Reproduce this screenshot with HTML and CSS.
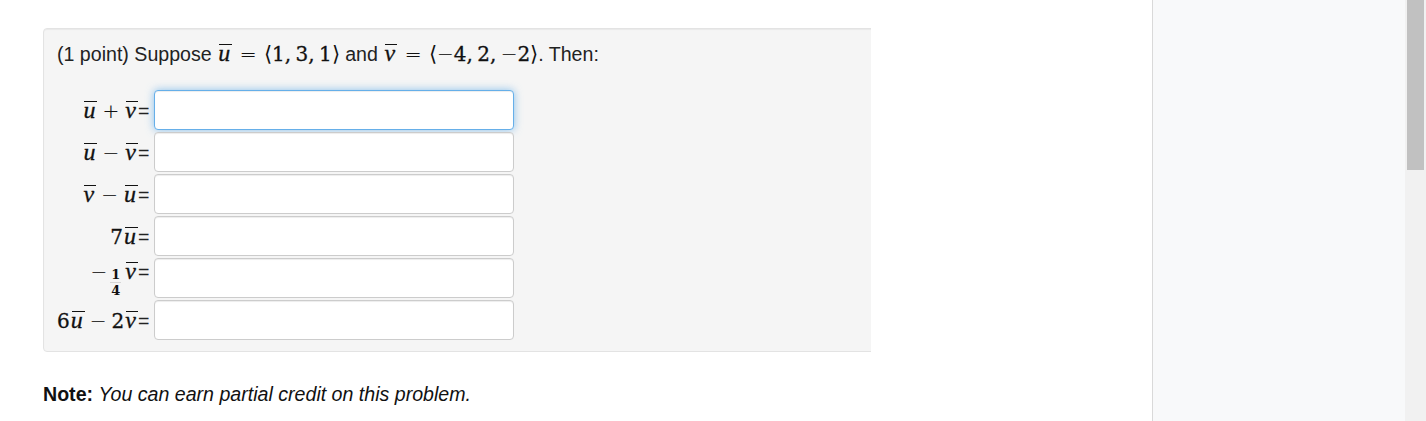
FILE: index.html
```html
<!DOCTYPE html>
<html lang="en">
<head>
    <meta charset="UTF-8">
    <meta name="viewport" content="width=device-width, initial-scale=1.0">
    <title>Vector operations</title>
    <link rel="stylesheet" href="styles.css">
</head>
<body>

<div class="page">
    <main class="content">
        <div class="problem-clip">
            <div class="problem">
                <p class="statement">
                    (1 point) Suppose
                    <span class="math"><span class="vec">u</span><span class="op rel">=</span><span class="ang">⟨</span>1,<span class="thin"></span>3,<span class="thin"></span>1<span class="ang">⟩</span></span>
                    and
                    <span class="math"><span class="vec">v</span><span class="op rel">=</span><span class="ang">⟨</span><span class="op">−</span>4,<span class="thin"></span>2,<span class="thin"></span><span class="op">−</span>2<span class="ang">⟩</span></span>. Then:
                </p>

                <table class="answers">
                    <tr>
                        <td class="label"><span class="math"><span class="vec">u</span><span class="op bin">+</span><span class="vec">v</span></span>=</td>
                        <td><input class="answer focused" type="text"></td>
                    </tr>
                    <tr>
                        <td class="label"><span class="math"><span class="vec">u</span><span class="op bin">−</span><span class="vec">v</span></span>=</td>
                        <td><input class="answer" type="text"></td>
                    </tr>
                    <tr>
                        <td class="label"><span class="math"><span class="vec">v</span><span class="op bin">−</span><span class="vec">u</span></span>=</td>
                        <td><input class="answer" type="text"></td>
                    </tr>
                    <tr>
                        <td class="label"><span class="math">7<span class="vec">u</span></span>=</td>
                        <td><input class="answer" type="text"></td>
                    </tr>
                    <tr>
                        <td class="label"><span class="math"><span class="op">−</span><span class="frac"><span class="num">1</span><span class="den">4</span></span><span class="vec">v</span></span>=</td>
                        <td><input class="answer" type="text"></td>
                    </tr>
                    <tr>
                        <td class="label"><span class="math">6<span class="vec">u</span><span class="op bin">−</span>2<span class="vec">v</span></span>=</td>
                        <td><input class="answer" type="text"></td>
                    </tr>
                </table>
            </div>
        </div>

        <p class="note"><b>Note:</b> <i>You can earn partial credit on this problem.</i></p>
    </main>

    <aside class="sidebar"></aside>

    <div class="scrollbar"><div class="thumb"></div></div>
</div>

</body>
</html>
```

FILE: styles.css
```css
* {box-sizing: border-box; margin: 0; padding: 0;}

body {
    font-family: "Liberation Sans", Arial, sans-serif;
    font-size: 19.6px;
    line-height: 1.36;
    color: #222;
    background: #fff;
}

.page {
    display: flex;
    height: 100vh;
    overflow: hidden;
}

.content {
    flex: 0 0 1152px;
    padding: 28px 0 0 43px;
}

/* the well is wider than the column and gets cut off on the right */
.problem-clip {
    width: 828px;
    overflow: hidden;
}

.problem {
    width: 1000px;
    background: #f5f5f5;
    border: 1px solid #e3e3e3;
    border-radius: 4px;
    box-shadow: inset 0 1px 1px rgba(0,0,0,0.05);
    padding: 12px 13px 10px;
}

.statement {
    margin-bottom: 21px;
}

.math {
    font-family: "DejaVu Serif", "Liberation Serif", serif;
    font-size: 20px;
    line-height: 1;
    color: #111;
    -webkit-text-stroke: 0.3px #111;
    white-space: nowrap;
}

.vec {
    position: relative;
    font-family: "Liberation Serif", serif;
    font-size: 24px;
    font-style: italic;
    padding: 0 2px 0 1px;
}

.vec::before {
    content: "";
    position: absolute;
    left: 2px;
    right: 0;
    top: 0.17em;
    border-top: 1.3px solid #111;
}

/* TeX operators are wider than the serif ones */
.op {
    font-family: "DejaVu Sans", sans-serif;
    font-size: 20px;
    font-weight: 300;
    -webkit-text-stroke: 0.15px #111;
}

.rel {
    margin: 0 0.38em;
}

.bin {
    margin: 0 0.25em;
}

.thin {
    display: inline-block;
    width: 0.22em;
}

.ang {
    font-family: "DejaVu Sans", sans-serif;
    font-size: 21px;
    font-weight: 300;
    -webkit-text-stroke: 0;
}

.frac {
    display: inline-flex;
    flex-direction: column;
    align-items: center;
    font-size: 13px;
    font-weight: bold;
    margin: 0 3px 0 3px;
    -webkit-text-stroke: 0;
}

.num {
    line-height: 0.8;
    padding: 0 1px 2px;
    border-bottom: 1px solid #d6d6d6;
}

.den {
    line-height: 0.8;
    padding-top: 3px;
}

.answers {
    border-collapse: collapse;
}

.answers td {
    padding: 1px 0;
    vertical-align: middle;
}

.label {
    text-align: right;
    line-height: 1;
    padding-right: 5px !important;
    white-space: nowrap;
}

.answer {
    display: block;
    width: 360px;
    height: 40px;
    background: #fff;
    border: 1px solid #ccc;
    border-radius: 4px;
    box-shadow: inset 0 1px 1px rgba(0,0,0,0.075);
    font: inherit;
    padding: 6px 12px;
    outline: none;
}

.answer.focused {
    border-color: #66afe9;
    box-shadow: inset 0 1px 1px rgba(0,0,0,0.075), 0 0 8px rgba(102,175,233,0.75);
}

.note {
    margin-top: 29px;
    color: #111;
}

.sidebar {
    flex: 1;
    background: #f8f9fa;
    border-left: 1px solid #d9d9d9;
}

.scrollbar {
    flex: 0 0 21px;
    background: #f1f1f1;
    padding: 0 2px;
}

.thumb {
    height: 170px;
    background: #c1c1c1;
}
```
